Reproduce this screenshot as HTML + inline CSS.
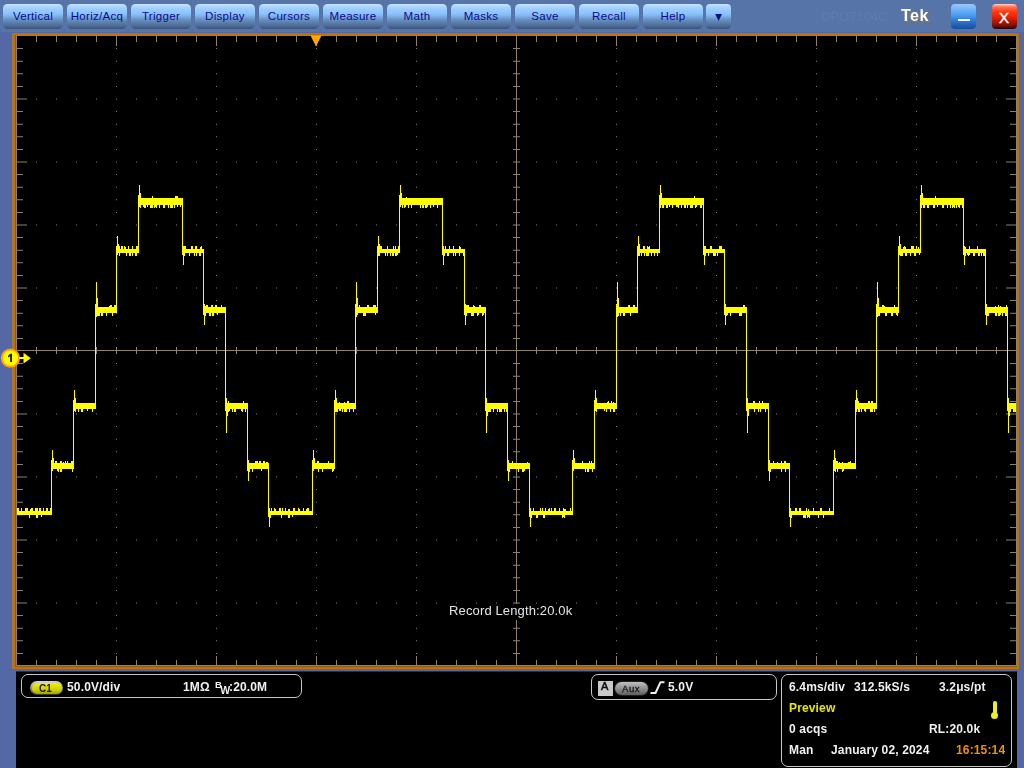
<!DOCTYPE html>
<html><head><meta charset="utf-8"><style>
html,body{margin:0;padding:0}
body{width:1024px;height:768px;position:relative;overflow:hidden;background:#5468a6;font-family:"Liberation Sans",sans-serif}
#topbar{position:absolute;left:0;top:0;width:1024px;height:32px;background:#5674a8}
.btn{position:absolute;top:4px;height:25px;border-radius:4.5px;box-sizing:border-box;
background:linear-gradient(to bottom,#cce6ff 0px,#b0d8ff 2px,#9ccdff 5px,#8cc4fc 9px,#84bcf4 11px,#78a8dc 13px,#6a98c8 15px,#6088b8 17px,#5a7cac 19px,#52709c 21px,#48628c 23px,#3a5272 25px);
color:#10088e;font-size:11.5px;letter-spacing:0.3px;line-height:25px;text-align:center}
.t{position:absolute;white-space:nowrap;line-height:1;will-change:transform}
.box{position:absolute;border:1.5px solid #c8c8c8;border-radius:7px;box-sizing:border-box}
svg{position:absolute;left:0;top:0}
</style></head><body>
<div id="topbar"></div>
<div class="btn" style="left:3px;width:60px">Vertical</div>
<div class="btn" style="left:67px;width:60px">Horiz/Acq</div>
<div class="btn" style="left:131px;width:60px">Trigger</div>
<div class="btn" style="left:195px;width:60px">Display</div>
<div class="btn" style="left:259px;width:60px">Cursors</div>
<div class="btn" style="left:323px;width:60px">Measure</div>
<div class="btn" style="left:387px;width:60px">Math</div>
<div class="btn" style="left:451px;width:60px">Masks</div>
<div class="btn" style="left:515px;width:60px">Save</div>
<div class="btn" style="left:579px;width:60px">Recall</div>
<div class="btn" style="left:643px;width:60px">Help</div>
<div class="btn" style="left:706px;width:25px;border-radius:4px"></div>
<svg width="1024" height="40" style="position:absolute;left:0;top:0"><path d="M715.2 14H722L718.6 20.8Z" fill="#0c0a84"/></svg>

<div class="t" style="left:821px;top:10px;font-size:13px;color:#5b7cad">DPO7104C</div>
<div class="t" style="left:901px;top:8px;font-size:16px;font-weight:bold;letter-spacing:0.5px;color:#fff;text-shadow:1.5px 1.5px 0.6px rgba(140,118,80,0.75)">Tek</div>
<div style="position:absolute;left:951px;top:4px;width:25px;height:25px;border-radius:4px;background:linear-gradient(to bottom,#9ac8fa 0%,#4a9cf4 45%,#2a74d0 70%,#1a4c98 100%)"></div>
<div style="position:absolute;left:958px;top:19px;width:12px;height:2px;background:#fff"></div>
<div style="position:absolute;left:992px;top:4px;width:25px;height:25px;border-radius:4px;background:linear-gradient(to bottom,#ffd4c4 0px,#ff7050 3px,#ff3810 8px,#f02800 12px,#b01400 18px,#701000 22px,#280000 25px)"></div>
<div style="position:absolute;line-height:1;left:999px;top:10px;font-size:15px;color:#fff;-webkit-text-stroke:0.4px #fff">X</div>
<svg width="1024" height="768" viewBox="0 0 1024 768">
<rect x="11" y="32" width="1009" height="638" fill="#5068ac"/>
<rect x="12" y="33" width="1007" height="636" fill="#c27000"/>
<rect x="12" y="33" width="1" height="636" fill="#a87838"/>
<rect x="15" y="35" width="1" height="632" fill="#8a5a14"/>
<rect x="15" y="666" width="1002" height="1" fill="#8a5c18"/>
<rect x="16" y="35" width="1001" height="631" fill="#8e826a"/>
<rect x="17" y="36" width="999" height="629" fill="#000"/>
<rect x="16" y="671" width="1001" height="1" fill="#283050"/>
<path shape-rendering="crispEdges" fill="#8e826a" d="M36 36h1v6h-1zM36 660h1v5h-1zM56 36h1v6h-1zM56 660h1v5h-1zM76 36h1v6h-1zM76 660h1v5h-1zM96 36h1v6h-1zM96 660h1v5h-1zM116 36h1v10h-1zM116 656h1v9h-1zM136 36h1v6h-1zM136 660h1v5h-1zM156 36h1v6h-1zM156 660h1v5h-1zM176 36h1v6h-1zM176 660h1v5h-1zM196 36h1v6h-1zM196 660h1v5h-1zM216 36h1v10h-1zM216 656h1v9h-1zM236 36h1v6h-1zM236 660h1v5h-1zM256 36h1v6h-1zM256 660h1v5h-1zM276 36h1v6h-1zM276 660h1v5h-1zM296 36h1v6h-1zM296 660h1v5h-1zM316 36h1v10h-1zM316 656h1v9h-1zM336 36h1v6h-1zM336 660h1v5h-1zM356 36h1v6h-1zM356 660h1v5h-1zM376 36h1v6h-1zM376 660h1v5h-1zM396 36h1v6h-1zM396 660h1v5h-1zM416 36h1v10h-1zM416 656h1v9h-1zM436 36h1v6h-1zM436 660h1v5h-1zM456 36h1v6h-1zM456 660h1v5h-1zM476 36h1v6h-1zM476 660h1v5h-1zM496 36h1v6h-1zM496 660h1v5h-1zM536 36h1v6h-1zM536 660h1v5h-1zM556 36h1v6h-1zM556 660h1v5h-1zM576 36h1v6h-1zM576 660h1v5h-1zM596 36h1v6h-1zM596 660h1v5h-1zM616 36h1v10h-1zM616 656h1v9h-1zM636 36h1v6h-1zM636 660h1v5h-1zM656 36h1v6h-1zM656 660h1v5h-1zM676 36h1v6h-1zM676 660h1v5h-1zM696 36h1v6h-1zM696 660h1v5h-1zM716 36h1v10h-1zM716 656h1v9h-1zM736 36h1v6h-1zM736 660h1v5h-1zM756 36h1v6h-1zM756 660h1v5h-1zM776 36h1v6h-1zM776 660h1v5h-1zM796 36h1v6h-1zM796 660h1v5h-1zM816 36h1v10h-1zM816 656h1v9h-1zM836 36h1v6h-1zM836 660h1v5h-1zM856 36h1v6h-1zM856 660h1v5h-1zM876 36h1v6h-1zM876 660h1v5h-1zM896 36h1v6h-1zM896 660h1v5h-1zM916 36h1v10h-1zM916 656h1v9h-1zM936 36h1v6h-1zM936 660h1v5h-1zM956 36h1v6h-1zM956 660h1v5h-1zM976 36h1v6h-1zM976 660h1v5h-1zM996 36h1v6h-1zM996 660h1v5h-1zM17 350h999v1h-999zM516 36h1v629h-1zM36 347h1v7h-1zM56 347h1v7h-1zM76 347h1v7h-1zM96 347h1v7h-1zM116 347h1v7h-1zM136 347h1v7h-1zM156 347h1v7h-1zM176 347h1v7h-1zM196 347h1v7h-1zM216 347h1v7h-1zM236 347h1v7h-1zM256 347h1v7h-1zM276 347h1v7h-1zM296 347h1v7h-1zM316 347h1v7h-1zM336 347h1v7h-1zM356 347h1v7h-1zM376 347h1v7h-1zM396 347h1v7h-1zM416 347h1v7h-1zM436 347h1v7h-1zM456 347h1v7h-1zM476 347h1v7h-1zM496 347h1v7h-1zM536 347h1v7h-1zM556 347h1v7h-1zM576 347h1v7h-1zM596 347h1v7h-1zM616 347h1v7h-1zM636 347h1v7h-1zM656 347h1v7h-1zM676 347h1v7h-1zM696 347h1v7h-1zM716 347h1v7h-1zM736 347h1v7h-1zM756 347h1v7h-1zM776 347h1v7h-1zM796 347h1v7h-1zM816 347h1v7h-1zM836 347h1v7h-1zM856 347h1v7h-1zM876 347h1v7h-1zM896 347h1v7h-1zM916 347h1v7h-1zM936 347h1v7h-1zM956 347h1v7h-1zM976 347h1v7h-1zM996 347h1v7h-1z"/>
<path fill="#8e826a" d="M17 48.10h6v1h-6zM1010 48.10h6v1h-6zM17 60.70h6v1h-6zM1010 60.70h6v1h-6zM17 73.30h6v1h-6zM1010 73.30h6v1h-6zM17 85.90h6v1h-6zM1010 85.90h6v1h-6zM17 98.50h10v1h-10zM1006 98.50h10v1h-10zM17 111.10h6v1h-6zM1010 111.10h6v1h-6zM17 123.70h6v1h-6zM1010 123.70h6v1h-6zM17 136.30h6v1h-6zM1010 136.30h6v1h-6zM17 148.90h6v1h-6zM1010 148.90h6v1h-6zM17 161.50h10v1h-10zM1006 161.50h10v1h-10zM17 174.10h6v1h-6zM1010 174.10h6v1h-6zM17 186.70h6v1h-6zM1010 186.70h6v1h-6zM17 199.30h6v1h-6zM1010 199.30h6v1h-6zM17 211.90h6v1h-6zM1010 211.90h6v1h-6zM17 224.50h10v1h-10zM1006 224.50h10v1h-10zM17 237.10h6v1h-6zM1010 237.10h6v1h-6zM17 249.70h6v1h-6zM1010 249.70h6v1h-6zM17 262.30h6v1h-6zM1010 262.30h6v1h-6zM17 274.90h6v1h-6zM1010 274.90h6v1h-6zM17 287.50h10v1h-10zM1006 287.50h10v1h-10zM17 300.10h6v1h-6zM1010 300.10h6v1h-6zM17 312.70h6v1h-6zM1010 312.70h6v1h-6zM17 325.30h6v1h-6zM1010 325.30h6v1h-6zM17 337.90h6v1h-6zM1010 337.90h6v1h-6zM17 363.10h6v1h-6zM1010 363.10h6v1h-6zM17 375.70h6v1h-6zM1010 375.70h6v1h-6zM17 388.30h6v1h-6zM1010 388.30h6v1h-6zM17 400.90h6v1h-6zM1010 400.90h6v1h-6zM17 413.50h10v1h-10zM1006 413.50h10v1h-10zM17 426.10h6v1h-6zM1010 426.10h6v1h-6zM17 438.70h6v1h-6zM1010 438.70h6v1h-6zM17 451.30h6v1h-6zM1010 451.30h6v1h-6zM17 463.90h6v1h-6zM1010 463.90h6v1h-6zM17 476.50h10v1h-10zM1006 476.50h10v1h-10zM17 489.10h6v1h-6zM1010 489.10h6v1h-6zM17 501.70h6v1h-6zM1010 501.70h6v1h-6zM17 514.30h6v1h-6zM1010 514.30h6v1h-6zM17 526.90h6v1h-6zM1010 526.90h6v1h-6zM17 539.50h10v1h-10zM1006 539.50h10v1h-10zM17 552.10h6v1h-6zM1010 552.10h6v1h-6zM17 564.70h6v1h-6zM1010 564.70h6v1h-6zM17 577.30h6v1h-6zM1010 577.30h6v1h-6zM17 589.90h6v1h-6zM1010 589.90h6v1h-6zM17 602.50h10v1h-10zM1006 602.50h10v1h-10zM17 615.10h6v1h-6zM1010 615.10h6v1h-6zM17 627.70h6v1h-6zM1010 627.70h6v1h-6zM17 640.30h6v1h-6zM1010 640.30h6v1h-6zM17 652.90h6v1h-6zM1010 652.90h6v1h-6zM513 48.10h7v1h-7zM513 60.70h7v1h-7zM513 73.30h7v1h-7zM513 85.90h7v1h-7zM513 98.50h7v1h-7zM513 111.10h7v1h-7zM513 123.70h7v1h-7zM513 136.30h7v1h-7zM513 148.90h7v1h-7zM513 161.50h7v1h-7zM513 174.10h7v1h-7zM513 186.70h7v1h-7zM513 199.30h7v1h-7zM513 211.90h7v1h-7zM513 224.50h7v1h-7zM513 237.10h7v1h-7zM513 249.70h7v1h-7zM513 262.30h7v1h-7zM513 274.90h7v1h-7zM513 287.50h7v1h-7zM513 300.10h7v1h-7zM513 312.70h7v1h-7zM513 325.30h7v1h-7zM513 337.90h7v1h-7zM513 363.10h7v1h-7zM513 375.70h7v1h-7zM513 388.30h7v1h-7zM513 400.90h7v1h-7zM513 413.50h7v1h-7zM513 426.10h7v1h-7zM513 438.70h7v1h-7zM513 451.30h7v1h-7zM513 463.90h7v1h-7zM513 476.50h7v1h-7zM513 489.10h7v1h-7zM513 501.70h7v1h-7zM513 514.30h7v1h-7zM513 526.90h7v1h-7zM513 539.50h7v1h-7zM513 552.10h7v1h-7zM513 564.70h7v1h-7zM513 577.30h7v1h-7zM513 589.90h7v1h-7zM513 602.50h7v1h-7zM513 615.10h7v1h-7zM513 627.70h7v1h-7zM513 640.30h7v1h-7zM513 652.90h7v1h-7zM116 48.10h1v1h-1zM116 60.70h1v1h-1zM116 73.30h1v1h-1zM116 85.90h1v1h-1zM116 111.10h1v1h-1zM116 123.70h1v1h-1zM116 136.30h1v1h-1zM116 148.90h1v1h-1zM116 174.10h1v1h-1zM116 186.70h1v1h-1zM116 199.30h1v1h-1zM116 211.90h1v1h-1zM116 237.10h1v1h-1zM116 249.70h1v1h-1zM116 262.30h1v1h-1zM116 274.90h1v1h-1zM116 300.10h1v1h-1zM116 312.70h1v1h-1zM116 325.30h1v1h-1zM116 337.90h1v1h-1zM116 363.10h1v1h-1zM116 375.70h1v1h-1zM116 388.30h1v1h-1zM116 400.90h1v1h-1zM116 426.10h1v1h-1zM116 438.70h1v1h-1zM116 451.30h1v1h-1zM116 463.90h1v1h-1zM116 489.10h1v1h-1zM116 501.70h1v1h-1zM116 514.30h1v1h-1zM116 526.90h1v1h-1zM116 552.10h1v1h-1zM116 564.70h1v1h-1zM116 577.30h1v1h-1zM116 589.90h1v1h-1zM116 615.10h1v1h-1zM116 627.70h1v1h-1zM116 640.30h1v1h-1zM116 652.90h1v1h-1zM36 98.50h1v1h-1zM56 98.50h1v1h-1zM76 98.50h1v1h-1zM96 98.50h1v1h-1zM116 98.50h1v1h-1zM136 98.50h1v1h-1zM156 98.50h1v1h-1zM176 98.50h1v1h-1zM196 98.50h1v1h-1zM216 98.50h1v1h-1zM236 98.50h1v1h-1zM256 98.50h1v1h-1zM276 98.50h1v1h-1zM296 98.50h1v1h-1zM316 98.50h1v1h-1zM336 98.50h1v1h-1zM356 98.50h1v1h-1zM376 98.50h1v1h-1zM396 98.50h1v1h-1zM416 98.50h1v1h-1zM436 98.50h1v1h-1zM456 98.50h1v1h-1zM476 98.50h1v1h-1zM496 98.50h1v1h-1zM516 98.50h1v1h-1zM536 98.50h1v1h-1zM556 98.50h1v1h-1zM576 98.50h1v1h-1zM596 98.50h1v1h-1zM616 98.50h1v1h-1zM636 98.50h1v1h-1zM656 98.50h1v1h-1zM676 98.50h1v1h-1zM696 98.50h1v1h-1zM716 98.50h1v1h-1zM736 98.50h1v1h-1zM756 98.50h1v1h-1zM776 98.50h1v1h-1zM796 98.50h1v1h-1zM816 98.50h1v1h-1zM836 98.50h1v1h-1zM856 98.50h1v1h-1zM876 98.50h1v1h-1zM896 98.50h1v1h-1zM916 98.50h1v1h-1zM936 98.50h1v1h-1zM956 98.50h1v1h-1zM976 98.50h1v1h-1zM996 98.50h1v1h-1zM216 48.10h1v1h-1zM216 60.70h1v1h-1zM216 73.30h1v1h-1zM216 85.90h1v1h-1zM216 111.10h1v1h-1zM216 123.70h1v1h-1zM216 136.30h1v1h-1zM216 148.90h1v1h-1zM216 174.10h1v1h-1zM216 186.70h1v1h-1zM216 199.30h1v1h-1zM216 211.90h1v1h-1zM216 237.10h1v1h-1zM216 249.70h1v1h-1zM216 262.30h1v1h-1zM216 274.90h1v1h-1zM216 300.10h1v1h-1zM216 312.70h1v1h-1zM216 325.30h1v1h-1zM216 337.90h1v1h-1zM216 363.10h1v1h-1zM216 375.70h1v1h-1zM216 388.30h1v1h-1zM216 400.90h1v1h-1zM216 426.10h1v1h-1zM216 438.70h1v1h-1zM216 451.30h1v1h-1zM216 463.90h1v1h-1zM216 489.10h1v1h-1zM216 501.70h1v1h-1zM216 514.30h1v1h-1zM216 526.90h1v1h-1zM216 552.10h1v1h-1zM216 564.70h1v1h-1zM216 577.30h1v1h-1zM216 589.90h1v1h-1zM216 615.10h1v1h-1zM216 627.70h1v1h-1zM216 640.30h1v1h-1zM216 652.90h1v1h-1zM36 161.50h1v1h-1zM56 161.50h1v1h-1zM76 161.50h1v1h-1zM96 161.50h1v1h-1zM116 161.50h1v1h-1zM136 161.50h1v1h-1zM156 161.50h1v1h-1zM176 161.50h1v1h-1zM196 161.50h1v1h-1zM216 161.50h1v1h-1zM236 161.50h1v1h-1zM256 161.50h1v1h-1zM276 161.50h1v1h-1zM296 161.50h1v1h-1zM316 161.50h1v1h-1zM336 161.50h1v1h-1zM356 161.50h1v1h-1zM376 161.50h1v1h-1zM396 161.50h1v1h-1zM416 161.50h1v1h-1zM436 161.50h1v1h-1zM456 161.50h1v1h-1zM476 161.50h1v1h-1zM496 161.50h1v1h-1zM516 161.50h1v1h-1zM536 161.50h1v1h-1zM556 161.50h1v1h-1zM576 161.50h1v1h-1zM596 161.50h1v1h-1zM616 161.50h1v1h-1zM636 161.50h1v1h-1zM656 161.50h1v1h-1zM676 161.50h1v1h-1zM696 161.50h1v1h-1zM716 161.50h1v1h-1zM736 161.50h1v1h-1zM756 161.50h1v1h-1zM776 161.50h1v1h-1zM796 161.50h1v1h-1zM816 161.50h1v1h-1zM836 161.50h1v1h-1zM856 161.50h1v1h-1zM876 161.50h1v1h-1zM896 161.50h1v1h-1zM916 161.50h1v1h-1zM936 161.50h1v1h-1zM956 161.50h1v1h-1zM976 161.50h1v1h-1zM996 161.50h1v1h-1zM316 48.10h1v1h-1zM316 60.70h1v1h-1zM316 73.30h1v1h-1zM316 85.90h1v1h-1zM316 111.10h1v1h-1zM316 123.70h1v1h-1zM316 136.30h1v1h-1zM316 148.90h1v1h-1zM316 174.10h1v1h-1zM316 186.70h1v1h-1zM316 199.30h1v1h-1zM316 211.90h1v1h-1zM316 237.10h1v1h-1zM316 249.70h1v1h-1zM316 262.30h1v1h-1zM316 274.90h1v1h-1zM316 300.10h1v1h-1zM316 312.70h1v1h-1zM316 325.30h1v1h-1zM316 337.90h1v1h-1zM316 363.10h1v1h-1zM316 375.70h1v1h-1zM316 388.30h1v1h-1zM316 400.90h1v1h-1zM316 426.10h1v1h-1zM316 438.70h1v1h-1zM316 451.30h1v1h-1zM316 463.90h1v1h-1zM316 489.10h1v1h-1zM316 501.70h1v1h-1zM316 514.30h1v1h-1zM316 526.90h1v1h-1zM316 552.10h1v1h-1zM316 564.70h1v1h-1zM316 577.30h1v1h-1zM316 589.90h1v1h-1zM316 615.10h1v1h-1zM316 627.70h1v1h-1zM316 640.30h1v1h-1zM316 652.90h1v1h-1zM36 224.50h1v1h-1zM56 224.50h1v1h-1zM76 224.50h1v1h-1zM96 224.50h1v1h-1zM116 224.50h1v1h-1zM136 224.50h1v1h-1zM156 224.50h1v1h-1zM176 224.50h1v1h-1zM196 224.50h1v1h-1zM216 224.50h1v1h-1zM236 224.50h1v1h-1zM256 224.50h1v1h-1zM276 224.50h1v1h-1zM296 224.50h1v1h-1zM316 224.50h1v1h-1zM336 224.50h1v1h-1zM356 224.50h1v1h-1zM376 224.50h1v1h-1zM396 224.50h1v1h-1zM416 224.50h1v1h-1zM436 224.50h1v1h-1zM456 224.50h1v1h-1zM476 224.50h1v1h-1zM496 224.50h1v1h-1zM516 224.50h1v1h-1zM536 224.50h1v1h-1zM556 224.50h1v1h-1zM576 224.50h1v1h-1zM596 224.50h1v1h-1zM616 224.50h1v1h-1zM636 224.50h1v1h-1zM656 224.50h1v1h-1zM676 224.50h1v1h-1zM696 224.50h1v1h-1zM716 224.50h1v1h-1zM736 224.50h1v1h-1zM756 224.50h1v1h-1zM776 224.50h1v1h-1zM796 224.50h1v1h-1zM816 224.50h1v1h-1zM836 224.50h1v1h-1zM856 224.50h1v1h-1zM876 224.50h1v1h-1zM896 224.50h1v1h-1zM916 224.50h1v1h-1zM936 224.50h1v1h-1zM956 224.50h1v1h-1zM976 224.50h1v1h-1zM996 224.50h1v1h-1zM416 48.10h1v1h-1zM416 60.70h1v1h-1zM416 73.30h1v1h-1zM416 85.90h1v1h-1zM416 111.10h1v1h-1zM416 123.70h1v1h-1zM416 136.30h1v1h-1zM416 148.90h1v1h-1zM416 174.10h1v1h-1zM416 186.70h1v1h-1zM416 199.30h1v1h-1zM416 211.90h1v1h-1zM416 237.10h1v1h-1zM416 249.70h1v1h-1zM416 262.30h1v1h-1zM416 274.90h1v1h-1zM416 300.10h1v1h-1zM416 312.70h1v1h-1zM416 325.30h1v1h-1zM416 337.90h1v1h-1zM416 363.10h1v1h-1zM416 375.70h1v1h-1zM416 388.30h1v1h-1zM416 400.90h1v1h-1zM416 426.10h1v1h-1zM416 438.70h1v1h-1zM416 451.30h1v1h-1zM416 463.90h1v1h-1zM416 489.10h1v1h-1zM416 501.70h1v1h-1zM416 514.30h1v1h-1zM416 526.90h1v1h-1zM416 552.10h1v1h-1zM416 564.70h1v1h-1zM416 577.30h1v1h-1zM416 589.90h1v1h-1zM416 615.10h1v1h-1zM416 627.70h1v1h-1zM416 640.30h1v1h-1zM416 652.90h1v1h-1zM36 287.50h1v1h-1zM56 287.50h1v1h-1zM76 287.50h1v1h-1zM96 287.50h1v1h-1zM116 287.50h1v1h-1zM136 287.50h1v1h-1zM156 287.50h1v1h-1zM176 287.50h1v1h-1zM196 287.50h1v1h-1zM216 287.50h1v1h-1zM236 287.50h1v1h-1zM256 287.50h1v1h-1zM276 287.50h1v1h-1zM296 287.50h1v1h-1zM316 287.50h1v1h-1zM336 287.50h1v1h-1zM356 287.50h1v1h-1zM376 287.50h1v1h-1zM396 287.50h1v1h-1zM416 287.50h1v1h-1zM436 287.50h1v1h-1zM456 287.50h1v1h-1zM476 287.50h1v1h-1zM496 287.50h1v1h-1zM516 287.50h1v1h-1zM536 287.50h1v1h-1zM556 287.50h1v1h-1zM576 287.50h1v1h-1zM596 287.50h1v1h-1zM616 287.50h1v1h-1zM636 287.50h1v1h-1zM656 287.50h1v1h-1zM676 287.50h1v1h-1zM696 287.50h1v1h-1zM716 287.50h1v1h-1zM736 287.50h1v1h-1zM756 287.50h1v1h-1zM776 287.50h1v1h-1zM796 287.50h1v1h-1zM816 287.50h1v1h-1zM836 287.50h1v1h-1zM856 287.50h1v1h-1zM876 287.50h1v1h-1zM896 287.50h1v1h-1zM916 287.50h1v1h-1zM936 287.50h1v1h-1zM956 287.50h1v1h-1zM976 287.50h1v1h-1zM996 287.50h1v1h-1zM616 48.10h1v1h-1zM616 60.70h1v1h-1zM616 73.30h1v1h-1zM616 85.90h1v1h-1zM616 111.10h1v1h-1zM616 123.70h1v1h-1zM616 136.30h1v1h-1zM616 148.90h1v1h-1zM616 174.10h1v1h-1zM616 186.70h1v1h-1zM616 199.30h1v1h-1zM616 211.90h1v1h-1zM616 237.10h1v1h-1zM616 249.70h1v1h-1zM616 262.30h1v1h-1zM616 274.90h1v1h-1zM616 300.10h1v1h-1zM616 312.70h1v1h-1zM616 325.30h1v1h-1zM616 337.90h1v1h-1zM616 363.10h1v1h-1zM616 375.70h1v1h-1zM616 388.30h1v1h-1zM616 400.90h1v1h-1zM616 426.10h1v1h-1zM616 438.70h1v1h-1zM616 451.30h1v1h-1zM616 463.90h1v1h-1zM616 489.10h1v1h-1zM616 501.70h1v1h-1zM616 514.30h1v1h-1zM616 526.90h1v1h-1zM616 552.10h1v1h-1zM616 564.70h1v1h-1zM616 577.30h1v1h-1zM616 589.90h1v1h-1zM616 615.10h1v1h-1zM616 627.70h1v1h-1zM616 640.30h1v1h-1zM616 652.90h1v1h-1zM36 413.50h1v1h-1zM56 413.50h1v1h-1zM76 413.50h1v1h-1zM96 413.50h1v1h-1zM116 413.50h1v1h-1zM136 413.50h1v1h-1zM156 413.50h1v1h-1zM176 413.50h1v1h-1zM196 413.50h1v1h-1zM216 413.50h1v1h-1zM236 413.50h1v1h-1zM256 413.50h1v1h-1zM276 413.50h1v1h-1zM296 413.50h1v1h-1zM316 413.50h1v1h-1zM336 413.50h1v1h-1zM356 413.50h1v1h-1zM376 413.50h1v1h-1zM396 413.50h1v1h-1zM416 413.50h1v1h-1zM436 413.50h1v1h-1zM456 413.50h1v1h-1zM476 413.50h1v1h-1zM496 413.50h1v1h-1zM516 413.50h1v1h-1zM536 413.50h1v1h-1zM556 413.50h1v1h-1zM576 413.50h1v1h-1zM596 413.50h1v1h-1zM616 413.50h1v1h-1zM636 413.50h1v1h-1zM656 413.50h1v1h-1zM676 413.50h1v1h-1zM696 413.50h1v1h-1zM716 413.50h1v1h-1zM736 413.50h1v1h-1zM756 413.50h1v1h-1zM776 413.50h1v1h-1zM796 413.50h1v1h-1zM816 413.50h1v1h-1zM836 413.50h1v1h-1zM856 413.50h1v1h-1zM876 413.50h1v1h-1zM896 413.50h1v1h-1zM916 413.50h1v1h-1zM936 413.50h1v1h-1zM956 413.50h1v1h-1zM976 413.50h1v1h-1zM996 413.50h1v1h-1zM716 48.10h1v1h-1zM716 60.70h1v1h-1zM716 73.30h1v1h-1zM716 85.90h1v1h-1zM716 111.10h1v1h-1zM716 123.70h1v1h-1zM716 136.30h1v1h-1zM716 148.90h1v1h-1zM716 174.10h1v1h-1zM716 186.70h1v1h-1zM716 199.30h1v1h-1zM716 211.90h1v1h-1zM716 237.10h1v1h-1zM716 249.70h1v1h-1zM716 262.30h1v1h-1zM716 274.90h1v1h-1zM716 300.10h1v1h-1zM716 312.70h1v1h-1zM716 325.30h1v1h-1zM716 337.90h1v1h-1zM716 363.10h1v1h-1zM716 375.70h1v1h-1zM716 388.30h1v1h-1zM716 400.90h1v1h-1zM716 426.10h1v1h-1zM716 438.70h1v1h-1zM716 451.30h1v1h-1zM716 463.90h1v1h-1zM716 489.10h1v1h-1zM716 501.70h1v1h-1zM716 514.30h1v1h-1zM716 526.90h1v1h-1zM716 552.10h1v1h-1zM716 564.70h1v1h-1zM716 577.30h1v1h-1zM716 589.90h1v1h-1zM716 615.10h1v1h-1zM716 627.70h1v1h-1zM716 640.30h1v1h-1zM716 652.90h1v1h-1zM36 476.50h1v1h-1zM56 476.50h1v1h-1zM76 476.50h1v1h-1zM96 476.50h1v1h-1zM116 476.50h1v1h-1zM136 476.50h1v1h-1zM156 476.50h1v1h-1zM176 476.50h1v1h-1zM196 476.50h1v1h-1zM216 476.50h1v1h-1zM236 476.50h1v1h-1zM256 476.50h1v1h-1zM276 476.50h1v1h-1zM296 476.50h1v1h-1zM316 476.50h1v1h-1zM336 476.50h1v1h-1zM356 476.50h1v1h-1zM376 476.50h1v1h-1zM396 476.50h1v1h-1zM416 476.50h1v1h-1zM436 476.50h1v1h-1zM456 476.50h1v1h-1zM476 476.50h1v1h-1zM496 476.50h1v1h-1zM516 476.50h1v1h-1zM536 476.50h1v1h-1zM556 476.50h1v1h-1zM576 476.50h1v1h-1zM596 476.50h1v1h-1zM616 476.50h1v1h-1zM636 476.50h1v1h-1zM656 476.50h1v1h-1zM676 476.50h1v1h-1zM696 476.50h1v1h-1zM716 476.50h1v1h-1zM736 476.50h1v1h-1zM756 476.50h1v1h-1zM776 476.50h1v1h-1zM796 476.50h1v1h-1zM816 476.50h1v1h-1zM836 476.50h1v1h-1zM856 476.50h1v1h-1zM876 476.50h1v1h-1zM896 476.50h1v1h-1zM916 476.50h1v1h-1zM936 476.50h1v1h-1zM956 476.50h1v1h-1zM976 476.50h1v1h-1zM996 476.50h1v1h-1zM816 48.10h1v1h-1zM816 60.70h1v1h-1zM816 73.30h1v1h-1zM816 85.90h1v1h-1zM816 111.10h1v1h-1zM816 123.70h1v1h-1zM816 136.30h1v1h-1zM816 148.90h1v1h-1zM816 174.10h1v1h-1zM816 186.70h1v1h-1zM816 199.30h1v1h-1zM816 211.90h1v1h-1zM816 237.10h1v1h-1zM816 249.70h1v1h-1zM816 262.30h1v1h-1zM816 274.90h1v1h-1zM816 300.10h1v1h-1zM816 312.70h1v1h-1zM816 325.30h1v1h-1zM816 337.90h1v1h-1zM816 363.10h1v1h-1zM816 375.70h1v1h-1zM816 388.30h1v1h-1zM816 400.90h1v1h-1zM816 426.10h1v1h-1zM816 438.70h1v1h-1zM816 451.30h1v1h-1zM816 463.90h1v1h-1zM816 489.10h1v1h-1zM816 501.70h1v1h-1zM816 514.30h1v1h-1zM816 526.90h1v1h-1zM816 552.10h1v1h-1zM816 564.70h1v1h-1zM816 577.30h1v1h-1zM816 589.90h1v1h-1zM816 615.10h1v1h-1zM816 627.70h1v1h-1zM816 640.30h1v1h-1zM816 652.90h1v1h-1zM36 539.50h1v1h-1zM56 539.50h1v1h-1zM76 539.50h1v1h-1zM96 539.50h1v1h-1zM116 539.50h1v1h-1zM136 539.50h1v1h-1zM156 539.50h1v1h-1zM176 539.50h1v1h-1zM196 539.50h1v1h-1zM216 539.50h1v1h-1zM236 539.50h1v1h-1zM256 539.50h1v1h-1zM276 539.50h1v1h-1zM296 539.50h1v1h-1zM316 539.50h1v1h-1zM336 539.50h1v1h-1zM356 539.50h1v1h-1zM376 539.50h1v1h-1zM396 539.50h1v1h-1zM416 539.50h1v1h-1zM436 539.50h1v1h-1zM456 539.50h1v1h-1zM476 539.50h1v1h-1zM496 539.50h1v1h-1zM516 539.50h1v1h-1zM536 539.50h1v1h-1zM556 539.50h1v1h-1zM576 539.50h1v1h-1zM596 539.50h1v1h-1zM616 539.50h1v1h-1zM636 539.50h1v1h-1zM656 539.50h1v1h-1zM676 539.50h1v1h-1zM696 539.50h1v1h-1zM716 539.50h1v1h-1zM736 539.50h1v1h-1zM756 539.50h1v1h-1zM776 539.50h1v1h-1zM796 539.50h1v1h-1zM816 539.50h1v1h-1zM836 539.50h1v1h-1zM856 539.50h1v1h-1zM876 539.50h1v1h-1zM896 539.50h1v1h-1zM916 539.50h1v1h-1zM936 539.50h1v1h-1zM956 539.50h1v1h-1zM976 539.50h1v1h-1zM996 539.50h1v1h-1zM916 48.10h1v1h-1zM916 60.70h1v1h-1zM916 73.30h1v1h-1zM916 85.90h1v1h-1zM916 111.10h1v1h-1zM916 123.70h1v1h-1zM916 136.30h1v1h-1zM916 148.90h1v1h-1zM916 174.10h1v1h-1zM916 186.70h1v1h-1zM916 199.30h1v1h-1zM916 211.90h1v1h-1zM916 237.10h1v1h-1zM916 249.70h1v1h-1zM916 262.30h1v1h-1zM916 274.90h1v1h-1zM916 300.10h1v1h-1zM916 312.70h1v1h-1zM916 325.30h1v1h-1zM916 337.90h1v1h-1zM916 363.10h1v1h-1zM916 375.70h1v1h-1zM916 388.30h1v1h-1zM916 400.90h1v1h-1zM916 426.10h1v1h-1zM916 438.70h1v1h-1zM916 451.30h1v1h-1zM916 463.90h1v1h-1zM916 489.10h1v1h-1zM916 501.70h1v1h-1zM916 514.30h1v1h-1zM916 526.90h1v1h-1zM916 552.10h1v1h-1zM916 564.70h1v1h-1zM916 577.30h1v1h-1zM916 589.90h1v1h-1zM916 615.10h1v1h-1zM916 627.70h1v1h-1zM916 640.30h1v1h-1zM916 652.90h1v1h-1zM36 602.50h1v1h-1zM56 602.50h1v1h-1zM76 602.50h1v1h-1zM96 602.50h1v1h-1zM116 602.50h1v1h-1zM136 602.50h1v1h-1zM156 602.50h1v1h-1zM176 602.50h1v1h-1zM196 602.50h1v1h-1zM216 602.50h1v1h-1zM236 602.50h1v1h-1zM256 602.50h1v1h-1zM276 602.50h1v1h-1zM296 602.50h1v1h-1zM316 602.50h1v1h-1zM336 602.50h1v1h-1zM356 602.50h1v1h-1zM376 602.50h1v1h-1zM396 602.50h1v1h-1zM416 602.50h1v1h-1zM436 602.50h1v1h-1zM456 602.50h1v1h-1zM476 602.50h1v1h-1zM496 602.50h1v1h-1zM516 602.50h1v1h-1zM536 602.50h1v1h-1zM556 602.50h1v1h-1zM576 602.50h1v1h-1zM596 602.50h1v1h-1zM616 602.50h1v1h-1zM636 602.50h1v1h-1zM656 602.50h1v1h-1zM676 602.50h1v1h-1zM696 602.50h1v1h-1zM716 602.50h1v1h-1zM736 602.50h1v1h-1zM756 602.50h1v1h-1zM776 602.50h1v1h-1zM796 602.50h1v1h-1zM816 602.50h1v1h-1zM836 602.50h1v1h-1zM856 602.50h1v1h-1zM876 602.50h1v1h-1zM896 602.50h1v1h-1zM916 602.50h1v1h-1zM936 602.50h1v1h-1zM956 602.50h1v1h-1zM976 602.50h1v1h-1zM996 602.50h1v1h-1z"/>
<path shape-rendering="crispEdges" fill="#ffff00" d="M17 508h1v7h-1zM18 508h1v7h-1zM19 511h1v4h-1zM20 511h1v4h-1zM21 508h1v7h-1zM22 511h1v4h-1zM23 511h1v4h-1zM24 511h1v4h-1zM25 508h1v7h-1zM26 508h1v7h-1zM27 508h1v7h-1zM28 511h1v4h-1zM29 511h1v7h-1zM30 509h1v6h-1zM31 508h1v7h-1zM32 508h1v7h-1zM33 511h1v4h-1zM34 511h1v4h-1zM35 508h1v7h-1zM36 508h1v10h-1zM37 508h1v10h-1zM38 511h1v4h-1zM39 508h1v7h-1zM40 508h1v7h-1zM41 511h1v6h-1zM42 511h1v4h-1zM43 508h1v7h-1zM44 511h1v4h-1zM45 511h1v4h-1zM46 508h1v7h-1zM47 508h1v7h-1zM48 511h1v4h-1zM49 511h1v4h-1zM50 508h1v7h-1zM52 463h1v6h-1zM53 461h1v8h-1zM54 463h1v6h-1zM55 461h1v8h-1zM56 461h1v8h-1zM57 463h1v8h-1zM58 463h1v9h-1zM59 463h1v6h-1zM60 461h1v11h-1zM61 461h1v11h-1zM62 463h1v6h-1zM63 462h1v7h-1zM64 463h1v6h-1zM65 461h1v8h-1zM66 463h1v6h-1zM67 461h1v8h-1zM68 463h1v6h-1zM69 463h1v6h-1zM70 463h1v6h-1zM71 461h1v8h-1zM72 461h1v11h-1zM74 403h1v6h-1zM75 403h1v9h-1zM76 403h1v6h-1zM77 403h1v6h-1zM78 403h1v9h-1zM79 403h1v6h-1zM80 403h1v6h-1zM81 403h1v9h-1zM82 403h1v9h-1zM83 403h1v6h-1zM84 403h1v6h-1zM85 403h1v6h-1zM86 403h1v6h-1zM87 403h1v8h-1zM88 403h1v6h-1zM89 403h1v6h-1zM90 403h1v6h-1zM91 403h1v6h-1zM92 403h1v9h-1zM93 403h1v6h-1zM94 403h1v6h-1zM96 307h1v6h-1zM97 307h1v9h-1zM98 307h1v9h-1zM99 307h1v9h-1zM100 307h1v6h-1zM101 307h1v9h-1zM102 307h1v9h-1zM103 307h1v6h-1zM104 307h1v6h-1zM105 307h1v6h-1zM106 307h1v9h-1zM107 307h1v6h-1zM108 307h1v6h-1zM109 306h1v7h-1zM110 305h1v8h-1zM111 305h1v8h-1zM112 307h1v9h-1zM113 307h1v6h-1zM114 305h1v8h-1zM115 305h1v8h-1zM117 249h1v4h-1zM118 246h1v7h-1zM119 246h1v10h-1zM120 249h1v4h-1zM121 246h1v7h-1zM122 246h1v7h-1zM123 249h1v4h-1zM124 246h1v7h-1zM125 247h1v6h-1zM126 249h1v7h-1zM127 249h1v4h-1zM128 246h1v7h-1zM129 249h1v7h-1zM130 249h1v7h-1zM131 249h1v4h-1zM132 246h1v10h-1zM133 249h1v4h-1zM134 249h1v4h-1zM135 249h1v7h-1zM136 246h1v10h-1zM137 246h1v7h-1zM139 198h1v7h-1zM140 198h1v10h-1zM141 198h1v7h-1zM142 198h1v7h-1zM143 198h1v9h-1zM144 198h1v10h-1zM145 198h1v10h-1zM146 198h1v7h-1zM147 198h1v9h-1zM148 198h1v7h-1zM149 198h1v7h-1zM150 198h1v10h-1zM151 198h1v10h-1zM152 196h1v12h-1zM153 198h1v7h-1zM154 198h1v10h-1zM155 198h1v9h-1zM156 198h1v10h-1zM157 198h1v7h-1zM158 198h1v7h-1zM159 198h1v10h-1zM160 198h1v7h-1zM161 198h1v7h-1zM162 198h1v7h-1zM163 198h1v10h-1zM164 198h1v10h-1zM165 198h1v7h-1zM166 198h1v7h-1zM167 198h1v7h-1zM168 198h1v10h-1zM169 198h1v7h-1zM170 198h1v10h-1zM171 198h1v10h-1zM172 198h1v10h-1zM173 198h1v7h-1zM174 198h1v10h-1zM175 196h1v9h-1zM176 196h1v9h-1zM177 196h1v11h-1zM178 198h1v7h-1zM179 198h1v7h-1zM180 198h1v9h-1zM181 198h1v7h-1zM183 249h1v4h-1zM184 246h1v7h-1zM185 246h1v7h-1zM186 249h1v4h-1zM187 249h1v4h-1zM188 249h1v4h-1zM189 249h1v7h-1zM190 249h1v4h-1zM191 246h1v7h-1zM192 246h1v7h-1zM193 249h1v4h-1zM194 249h1v7h-1zM195 246h1v7h-1zM196 246h1v10h-1zM197 249h1v4h-1zM198 249h1v4h-1zM199 249h1v7h-1zM200 247h1v9h-1zM201 246h1v7h-1zM202 249h1v4h-1zM204 307h1v8h-1zM205 306h1v10h-1zM206 305h1v8h-1zM207 305h1v8h-1zM208 307h1v6h-1zM209 307h1v9h-1zM210 307h1v9h-1zM211 305h1v8h-1zM212 305h1v11h-1zM213 307h1v9h-1zM214 307h1v6h-1zM215 305h1v8h-1zM216 305h1v8h-1zM217 307h1v8h-1zM218 307h1v6h-1zM219 307h1v6h-1zM220 307h1v6h-1zM221 305h1v8h-1zM222 307h1v6h-1zM223 307h1v6h-1zM224 307h1v6h-1zM226 403h1v6h-1zM227 403h1v6h-1zM228 401h1v11h-1zM229 403h1v8h-1zM230 403h1v6h-1zM231 403h1v6h-1zM232 403h1v9h-1zM233 403h1v6h-1zM234 403h1v9h-1zM235 403h1v9h-1zM236 403h1v6h-1zM237 403h1v6h-1zM238 403h1v6h-1zM239 403h1v6h-1zM240 403h1v6h-1zM241 403h1v8h-1zM242 403h1v9h-1zM243 401h1v8h-1zM244 403h1v6h-1zM245 403h1v9h-1zM246 403h1v6h-1zM248 461h1v8h-1zM249 463h1v6h-1zM250 463h1v6h-1zM251 463h1v6h-1zM252 463h1v9h-1zM253 463h1v6h-1zM254 463h1v6h-1zM255 461h1v8h-1zM256 461h1v8h-1zM257 461h1v8h-1zM258 463h1v6h-1zM259 461h1v8h-1zM260 461h1v8h-1zM261 463h1v8h-1zM262 463h1v6h-1zM263 461h1v8h-1zM264 461h1v8h-1zM265 463h1v6h-1zM266 462h1v7h-1zM267 462h1v7h-1zM269 511h1v4h-1zM270 511h1v4h-1zM271 508h1v7h-1zM272 511h1v4h-1zM273 511h1v4h-1zM274 508h1v7h-1zM275 509h1v6h-1zM276 511h1v4h-1zM277 511h1v4h-1zM278 511h1v4h-1zM279 508h1v7h-1zM280 508h1v7h-1zM281 511h1v7h-1zM282 508h1v7h-1zM283 511h1v4h-1zM284 511h1v4h-1zM285 508h1v7h-1zM286 511h1v4h-1zM287 511h1v4h-1zM288 509h1v9h-1zM289 509h1v9h-1zM290 511h1v4h-1zM291 511h1v4h-1zM292 511h1v6h-1zM293 508h1v7h-1zM294 508h1v7h-1zM295 511h1v4h-1zM296 511h1v4h-1zM297 511h1v4h-1zM298 508h1v7h-1zM299 509h1v6h-1zM300 511h1v4h-1zM301 511h1v4h-1zM302 511h1v4h-1zM303 508h1v7h-1zM304 511h1v4h-1zM305 511h1v4h-1zM306 509h1v6h-1zM307 508h1v7h-1zM308 508h1v7h-1zM309 511h1v4h-1zM310 511h1v4h-1zM311 511h1v4h-1zM313 463h1v6h-1zM314 463h1v6h-1zM315 463h1v6h-1zM316 463h1v6h-1zM317 461h1v8h-1zM318 461h1v11h-1zM319 463h1v6h-1zM320 463h1v6h-1zM321 463h1v6h-1zM322 463h1v9h-1zM323 463h1v6h-1zM324 463h1v6h-1zM325 463h1v6h-1zM326 463h1v6h-1zM327 463h1v6h-1zM328 461h1v8h-1zM329 463h1v6h-1zM330 463h1v6h-1zM331 463h1v6h-1zM332 463h1v9h-1zM333 463h1v8h-1zM335 401h1v11h-1zM336 403h1v9h-1zM337 403h1v9h-1zM338 403h1v6h-1zM339 402h1v9h-1zM340 403h1v8h-1zM341 403h1v6h-1zM342 403h1v9h-1zM343 403h1v6h-1zM344 402h1v10h-1zM345 403h1v9h-1zM346 403h1v9h-1zM347 401h1v8h-1zM348 401h1v8h-1zM349 403h1v9h-1zM350 403h1v6h-1zM351 403h1v6h-1zM352 403h1v6h-1zM353 403h1v9h-1zM354 403h1v6h-1zM356 307h1v9h-1zM357 307h1v8h-1zM358 307h1v6h-1zM359 305h1v8h-1zM360 307h1v6h-1zM361 307h1v6h-1zM362 307h1v6h-1zM363 307h1v9h-1zM364 307h1v9h-1zM365 307h1v9h-1zM366 307h1v6h-1zM367 305h1v8h-1zM368 305h1v8h-1zM369 307h1v6h-1zM370 307h1v6h-1zM371 307h1v6h-1zM372 307h1v6h-1zM373 305h1v8h-1zM374 305h1v8h-1zM375 305h1v10h-1zM376 307h1v6h-1zM378 249h1v7h-1zM379 246h1v10h-1zM380 246h1v7h-1zM381 246h1v7h-1zM382 249h1v4h-1zM383 249h1v4h-1zM384 249h1v4h-1zM385 249h1v7h-1zM386 249h1v4h-1zM387 246h1v10h-1zM388 249h1v4h-1zM389 249h1v4h-1zM390 249h1v7h-1zM391 249h1v4h-1zM392 249h1v7h-1zM393 246h1v10h-1zM394 249h1v4h-1zM395 246h1v10h-1zM396 249h1v7h-1zM397 249h1v6h-1zM398 246h1v7h-1zM400 198h1v7h-1zM401 198h1v7h-1zM402 198h1v10h-1zM403 198h1v7h-1zM404 198h1v10h-1zM405 198h1v9h-1zM406 197h1v8h-1zM407 198h1v7h-1zM408 198h1v10h-1zM409 198h1v7h-1zM410 198h1v7h-1zM411 198h1v10h-1zM412 198h1v7h-1zM413 198h1v7h-1zM414 198h1v7h-1zM415 198h1v7h-1zM416 198h1v7h-1zM417 198h1v7h-1zM418 198h1v7h-1zM419 198h1v7h-1zM420 198h1v10h-1zM421 198h1v7h-1zM422 198h1v10h-1zM423 198h1v10h-1zM424 198h1v7h-1zM425 198h1v10h-1zM426 198h1v10h-1zM427 198h1v9h-1zM428 198h1v7h-1zM429 198h1v7h-1zM430 198h1v10h-1zM431 198h1v7h-1zM432 198h1v7h-1zM433 198h1v9h-1zM434 198h1v7h-1zM435 198h1v7h-1zM436 198h1v7h-1zM437 198h1v10h-1zM438 198h1v7h-1zM439 198h1v7h-1zM440 198h1v7h-1zM441 198h1v7h-1zM443 249h1v7h-1zM444 249h1v7h-1zM445 246h1v7h-1zM446 249h1v4h-1zM447 249h1v7h-1zM448 249h1v7h-1zM449 246h1v7h-1zM450 249h1v4h-1zM451 249h1v4h-1zM452 249h1v4h-1zM453 246h1v10h-1zM454 249h1v4h-1zM455 249h1v7h-1zM456 249h1v4h-1zM457 249h1v4h-1zM458 249h1v4h-1zM459 246h1v10h-1zM460 247h1v6h-1zM461 249h1v4h-1zM462 249h1v4h-1zM463 249h1v7h-1zM465 307h1v6h-1zM466 305h1v8h-1zM467 305h1v8h-1zM468 305h1v8h-1zM469 307h1v6h-1zM470 307h1v6h-1zM471 307h1v9h-1zM472 307h1v9h-1zM473 305h1v11h-1zM474 306h1v7h-1zM475 307h1v6h-1zM476 307h1v6h-1zM477 307h1v9h-1zM478 307h1v8h-1zM479 305h1v8h-1zM480 305h1v8h-1zM481 307h1v6h-1zM482 307h1v9h-1zM483 307h1v8h-1zM484 307h1v6h-1zM486 403h1v6h-1zM487 403h1v6h-1zM488 403h1v9h-1zM489 403h1v9h-1zM490 403h1v9h-1zM491 403h1v6h-1zM492 403h1v6h-1zM493 403h1v9h-1zM494 403h1v6h-1zM495 403h1v6h-1zM496 403h1v6h-1zM497 403h1v9h-1zM498 403h1v6h-1zM499 403h1v9h-1zM500 403h1v9h-1zM501 403h1v9h-1zM502 403h1v6h-1zM503 403h1v6h-1zM504 403h1v9h-1zM505 403h1v6h-1zM506 403h1v9h-1zM508 463h1v6h-1zM509 463h1v6h-1zM510 463h1v6h-1zM511 463h1v6h-1zM512 461h1v8h-1zM513 463h1v6h-1zM514 463h1v6h-1zM515 463h1v6h-1zM516 463h1v6h-1zM517 463h1v6h-1zM518 463h1v9h-1zM519 463h1v6h-1zM520 463h1v6h-1zM521 463h1v6h-1zM522 463h1v9h-1zM523 463h1v9h-1zM524 463h1v8h-1zM525 463h1v6h-1zM526 463h1v6h-1zM527 462h1v7h-1zM528 463h1v6h-1zM530 508h1v7h-1zM531 511h1v4h-1zM532 511h1v4h-1zM533 508h1v7h-1zM534 511h1v4h-1zM535 511h1v4h-1zM536 511h1v7h-1zM537 511h1v7h-1zM538 511h1v4h-1zM539 511h1v4h-1zM540 508h1v7h-1zM541 511h1v4h-1zM542 508h1v7h-1zM543 511h1v7h-1zM544 511h1v7h-1zM545 508h1v7h-1zM546 511h1v4h-1zM547 511h1v4h-1zM548 509h1v6h-1zM549 508h1v7h-1zM550 511h1v4h-1zM551 508h1v7h-1zM552 511h1v4h-1zM553 511h1v4h-1zM554 508h1v7h-1zM555 508h1v7h-1zM556 511h1v4h-1zM557 511h1v4h-1zM558 511h1v4h-1zM559 508h1v7h-1zM560 511h1v4h-1zM561 511h1v4h-1zM562 511h1v7h-1zM563 508h1v9h-1zM564 509h1v9h-1zM565 509h1v6h-1zM566 511h1v4h-1zM567 511h1v4h-1zM568 511h1v4h-1zM569 511h1v4h-1zM570 508h1v7h-1zM571 511h1v4h-1zM573 463h1v6h-1zM574 461h1v8h-1zM575 463h1v6h-1zM576 463h1v6h-1zM577 463h1v6h-1zM578 463h1v6h-1zM579 463h1v6h-1zM580 463h1v6h-1zM581 463h1v6h-1zM582 461h1v8h-1zM583 463h1v6h-1zM584 463h1v6h-1zM585 463h1v9h-1zM586 463h1v6h-1zM587 463h1v9h-1zM588 463h1v9h-1zM589 461h1v8h-1zM590 463h1v6h-1zM591 461h1v8h-1zM592 463h1v9h-1zM593 463h1v6h-1zM595 403h1v6h-1zM596 403h1v9h-1zM597 403h1v6h-1zM598 403h1v6h-1zM599 403h1v6h-1zM600 403h1v6h-1zM601 403h1v6h-1zM602 403h1v6h-1zM603 403h1v6h-1zM604 403h1v8h-1zM605 403h1v6h-1zM606 403h1v9h-1zM607 402h1v7h-1zM608 401h1v8h-1zM609 403h1v6h-1zM610 403h1v9h-1zM611 401h1v8h-1zM612 403h1v6h-1zM613 402h1v10h-1zM614 403h1v9h-1zM615 403h1v6h-1zM617 307h1v6h-1zM618 307h1v9h-1zM619 307h1v6h-1zM620 307h1v9h-1zM621 307h1v6h-1zM622 307h1v6h-1zM623 307h1v9h-1zM624 307h1v9h-1zM625 307h1v6h-1zM626 307h1v6h-1zM627 307h1v6h-1zM628 305h1v8h-1zM629 305h1v8h-1zM630 307h1v9h-1zM631 307h1v6h-1zM632 307h1v6h-1zM633 305h1v8h-1zM634 305h1v8h-1zM635 307h1v6h-1zM636 307h1v6h-1zM638 249h1v7h-1zM639 249h1v7h-1zM640 249h1v4h-1zM641 249h1v7h-1zM642 249h1v4h-1zM643 246h1v7h-1zM644 246h1v10h-1zM645 249h1v4h-1zM646 249h1v7h-1zM647 246h1v10h-1zM648 247h1v9h-1zM649 246h1v7h-1zM650 249h1v4h-1zM651 249h1v7h-1zM652 249h1v4h-1zM653 249h1v4h-1zM654 249h1v7h-1zM655 249h1v4h-1zM656 249h1v4h-1zM657 249h1v7h-1zM658 249h1v4h-1zM660 196h1v12h-1zM661 196h1v9h-1zM662 198h1v10h-1zM663 198h1v10h-1zM664 198h1v7h-1zM665 198h1v7h-1zM666 198h1v10h-1zM667 198h1v10h-1zM668 198h1v7h-1zM669 198h1v9h-1zM670 198h1v7h-1zM671 198h1v7h-1zM672 198h1v10h-1zM673 198h1v7h-1zM674 198h1v7h-1zM675 198h1v7h-1zM676 198h1v9h-1zM677 198h1v9h-1zM678 198h1v10h-1zM679 198h1v7h-1zM680 198h1v7h-1zM681 198h1v10h-1zM682 198h1v7h-1zM683 198h1v7h-1zM684 198h1v10h-1zM685 198h1v10h-1zM686 198h1v7h-1zM687 198h1v10h-1zM688 198h1v7h-1zM689 198h1v7h-1zM690 198h1v10h-1zM691 198h1v10h-1zM692 198h1v10h-1zM693 198h1v7h-1zM694 196h1v9h-1zM695 198h1v10h-1zM696 198h1v9h-1zM697 198h1v7h-1zM698 198h1v7h-1zM699 198h1v7h-1zM700 198h1v10h-1zM701 198h1v10h-1zM702 198h1v7h-1zM704 249h1v7h-1zM705 246h1v10h-1zM706 249h1v4h-1zM707 249h1v4h-1zM708 249h1v7h-1zM709 249h1v4h-1zM710 246h1v7h-1zM711 246h1v7h-1zM712 249h1v4h-1zM713 249h1v7h-1zM714 249h1v7h-1zM715 249h1v7h-1zM716 249h1v4h-1zM717 249h1v7h-1zM718 249h1v4h-1zM719 246h1v7h-1zM720 246h1v7h-1zM721 246h1v7h-1zM722 249h1v4h-1zM723 249h1v4h-1zM725 307h1v6h-1zM726 307h1v9h-1zM727 307h1v8h-1zM728 307h1v6h-1zM729 307h1v6h-1zM730 307h1v9h-1zM731 307h1v6h-1zM732 307h1v6h-1zM733 307h1v6h-1zM734 307h1v6h-1zM735 307h1v6h-1zM736 307h1v6h-1zM737 307h1v6h-1zM738 307h1v6h-1zM739 307h1v9h-1zM740 307h1v9h-1zM741 307h1v9h-1zM742 307h1v6h-1zM743 305h1v8h-1zM744 305h1v8h-1zM745 307h1v6h-1zM747 403h1v9h-1zM748 403h1v8h-1zM749 403h1v6h-1zM750 403h1v6h-1zM751 403h1v6h-1zM752 403h1v6h-1zM753 401h1v8h-1zM754 401h1v11h-1zM755 403h1v6h-1zM756 403h1v6h-1zM757 403h1v6h-1zM758 403h1v9h-1zM759 401h1v8h-1zM760 403h1v9h-1zM761 403h1v6h-1zM762 401h1v8h-1zM763 403h1v6h-1zM764 403h1v6h-1zM765 403h1v9h-1zM766 403h1v6h-1zM767 403h1v6h-1zM769 463h1v9h-1zM770 463h1v6h-1zM771 463h1v6h-1zM772 463h1v6h-1zM773 461h1v8h-1zM774 463h1v6h-1zM775 463h1v6h-1zM776 463h1v6h-1zM777 462h1v7h-1zM778 463h1v6h-1zM779 463h1v6h-1zM780 463h1v6h-1zM781 461h1v11h-1zM782 463h1v6h-1zM783 463h1v6h-1zM784 461h1v8h-1zM785 461h1v11h-1zM786 463h1v6h-1zM787 463h1v6h-1zM788 463h1v6h-1zM790 511h1v4h-1zM791 511h1v4h-1zM792 511h1v4h-1zM793 511h1v4h-1zM794 511h1v4h-1zM795 508h1v7h-1zM796 508h1v7h-1zM797 511h1v4h-1zM798 511h1v4h-1zM799 508h1v7h-1zM800 508h1v7h-1zM801 511h1v4h-1zM802 511h1v4h-1zM803 511h1v7h-1zM804 511h1v7h-1zM805 511h1v7h-1zM806 508h1v7h-1zM807 511h1v7h-1zM808 509h1v8h-1zM809 511h1v7h-1zM810 511h1v4h-1zM811 511h1v4h-1zM812 511h1v4h-1zM813 508h1v7h-1zM814 511h1v4h-1zM815 511h1v4h-1zM816 511h1v4h-1zM817 511h1v4h-1zM818 511h1v7h-1zM819 511h1v4h-1zM820 508h1v7h-1zM821 508h1v7h-1zM822 511h1v4h-1zM823 511h1v7h-1zM824 511h1v4h-1zM825 511h1v4h-1zM826 511h1v4h-1zM827 511h1v4h-1zM828 511h1v4h-1zM829 508h1v7h-1zM830 511h1v4h-1zM831 511h1v4h-1zM832 511h1v4h-1zM834 463h1v6h-1zM835 463h1v9h-1zM836 461h1v8h-1zM837 461h1v11h-1zM838 463h1v6h-1zM839 462h1v7h-1zM840 463h1v6h-1zM841 463h1v6h-1zM842 462h1v10h-1zM843 463h1v8h-1zM844 463h1v6h-1zM845 463h1v6h-1zM846 463h1v6h-1zM847 463h1v6h-1zM848 462h1v7h-1zM849 462h1v7h-1zM850 461h1v8h-1zM851 463h1v6h-1zM852 463h1v6h-1zM853 463h1v6h-1zM854 463h1v6h-1zM856 403h1v9h-1zM857 403h1v6h-1zM858 401h1v11h-1zM859 403h1v9h-1zM860 403h1v6h-1zM861 403h1v9h-1zM862 403h1v6h-1zM863 403h1v6h-1zM864 403h1v8h-1zM865 403h1v9h-1zM866 403h1v6h-1zM867 403h1v6h-1zM868 401h1v8h-1zM869 401h1v8h-1zM870 403h1v9h-1zM871 401h1v11h-1zM872 401h1v11h-1zM873 403h1v6h-1zM874 403h1v9h-1zM875 403h1v6h-1zM877 307h1v9h-1zM878 307h1v9h-1zM879 307h1v9h-1zM880 307h1v6h-1zM881 307h1v6h-1zM882 305h1v8h-1zM883 305h1v8h-1zM884 306h1v7h-1zM885 307h1v9h-1zM886 307h1v9h-1zM887 307h1v6h-1zM888 307h1v6h-1zM889 307h1v6h-1zM890 307h1v6h-1zM891 307h1v9h-1zM892 307h1v9h-1zM893 307h1v6h-1zM894 305h1v8h-1zM895 307h1v6h-1zM896 307h1v8h-1zM897 307h1v9h-1zM899 249h1v4h-1zM900 249h1v7h-1zM901 249h1v7h-1zM902 249h1v7h-1zM903 247h1v6h-1zM904 246h1v7h-1zM905 247h1v9h-1zM906 249h1v7h-1zM907 249h1v4h-1zM908 249h1v4h-1zM909 249h1v4h-1zM910 249h1v7h-1zM911 246h1v7h-1zM912 246h1v7h-1zM913 246h1v7h-1zM914 249h1v7h-1zM915 249h1v7h-1zM916 246h1v7h-1zM917 249h1v4h-1zM918 247h1v6h-1zM919 249h1v6h-1zM921 198h1v10h-1zM922 198h1v7h-1zM923 198h1v10h-1zM924 198h1v10h-1zM925 198h1v7h-1zM926 198h1v7h-1zM927 198h1v10h-1zM928 198h1v10h-1zM929 198h1v7h-1zM930 198h1v7h-1zM931 198h1v7h-1zM932 198h1v7h-1zM933 198h1v10h-1zM934 198h1v10h-1zM935 196h1v9h-1zM936 198h1v7h-1zM937 198h1v9h-1zM938 198h1v7h-1zM939 198h1v7h-1zM940 198h1v7h-1zM941 198h1v7h-1zM942 198h1v10h-1zM943 198h1v10h-1zM944 198h1v7h-1zM945 198h1v7h-1zM946 198h1v7h-1zM947 198h1v10h-1zM948 198h1v7h-1zM949 198h1v7h-1zM950 198h1v10h-1zM951 198h1v7h-1zM952 198h1v10h-1zM953 198h1v9h-1zM954 198h1v10h-1zM955 198h1v7h-1zM956 198h1v10h-1zM957 198h1v7h-1zM958 198h1v9h-1zM959 198h1v10h-1zM960 198h1v7h-1zM961 198h1v7h-1zM962 198h1v10h-1zM964 249h1v6h-1zM965 247h1v9h-1zM966 249h1v4h-1zM967 249h1v6h-1zM968 249h1v7h-1zM969 246h1v9h-1zM970 249h1v4h-1zM971 249h1v4h-1zM972 249h1v4h-1zM973 249h1v7h-1zM974 249h1v7h-1zM975 249h1v4h-1zM976 249h1v4h-1zM977 246h1v7h-1zM978 249h1v7h-1zM979 249h1v7h-1zM980 249h1v4h-1zM981 249h1v7h-1zM982 249h1v4h-1zM983 249h1v7h-1zM984 249h1v7h-1zM986 307h1v9h-1zM987 307h1v8h-1zM988 307h1v9h-1zM989 307h1v6h-1zM990 307h1v6h-1zM991 307h1v6h-1zM992 307h1v6h-1zM993 307h1v6h-1zM994 307h1v6h-1zM995 306h1v10h-1zM996 307h1v9h-1zM997 307h1v6h-1zM998 305h1v11h-1zM999 307h1v9h-1zM1000 306h1v9h-1zM1001 307h1v6h-1zM1002 307h1v9h-1zM1003 307h1v6h-1zM1004 307h1v6h-1zM1005 307h1v9h-1zM1006 305h1v11h-1zM1008 403h1v9h-1zM1009 403h1v6h-1zM1010 403h1v9h-1zM1011 403h1v6h-1zM1012 403h1v6h-1zM1013 403h1v9h-1zM1014 403h1v9h-1zM1015 403h1v9h-1zM51 460h1v55h-1zM52 450h1v21h-1zM53 458h1v11h-1zM73 400h1v69h-1zM74 390h1v21h-1zM75 398h1v11h-1zM95 304h1v105h-1zM96 282h1v35h-1zM97 298h1v15h-1zM116 246h1v67h-1zM117 236h1v19h-1zM118 244h1v9h-1zM138 195h1v58h-1zM139 185h1v22h-1zM140 193h1v12h-1zM182 198h1v57h-1zM183 246h1v19h-1zM184 249h1v7h-1zM203 249h1v66h-1zM204 304h1v21h-1zM205 307h1v9h-1zM225 307h1v104h-1zM226 398h1v35h-1zM227 403h1v13h-1zM247 403h1v68h-1zM248 460h1v21h-1zM249 463h1v9h-1zM268 463h1v54h-1zM269 508h1v19h-1zM270 511h1v7h-1zM312 460h1v55h-1zM313 450h1v21h-1zM314 458h1v11h-1zM334 400h1v69h-1zM335 390h1v21h-1zM336 398h1v11h-1zM355 304h1v105h-1zM356 282h1v35h-1zM357 298h1v15h-1zM377 246h1v67h-1zM378 236h1v19h-1zM379 244h1v9h-1zM399 195h1v58h-1zM400 185h1v22h-1zM401 193h1v12h-1zM442 198h1v57h-1zM443 246h1v19h-1zM444 249h1v7h-1zM464 249h1v66h-1zM465 304h1v21h-1zM466 307h1v9h-1zM485 307h1v104h-1zM486 398h1v35h-1zM487 403h1v13h-1zM507 403h1v68h-1zM508 460h1v21h-1zM509 463h1v9h-1zM529 463h1v54h-1zM530 508h1v19h-1zM531 511h1v7h-1zM572 460h1v55h-1zM573 450h1v21h-1zM574 458h1v11h-1zM594 400h1v69h-1zM595 390h1v21h-1zM596 398h1v11h-1zM616 304h1v105h-1zM617 282h1v35h-1zM618 298h1v15h-1zM637 246h1v67h-1zM638 236h1v19h-1zM639 244h1v9h-1zM659 195h1v58h-1zM660 185h1v22h-1zM661 193h1v12h-1zM703 198h1v57h-1zM704 246h1v19h-1zM705 249h1v7h-1zM724 249h1v66h-1zM725 304h1v21h-1zM726 307h1v9h-1zM746 307h1v104h-1zM747 398h1v35h-1zM748 403h1v13h-1zM768 403h1v68h-1zM769 460h1v21h-1zM770 463h1v9h-1zM789 463h1v54h-1zM790 508h1v19h-1zM791 511h1v7h-1zM833 460h1v55h-1zM834 450h1v21h-1zM835 458h1v11h-1zM855 400h1v69h-1zM856 390h1v21h-1zM857 398h1v11h-1zM876 304h1v105h-1zM877 282h1v35h-1zM878 298h1v15h-1zM898 246h1v67h-1zM899 236h1v19h-1zM900 244h1v9h-1zM920 195h1v58h-1zM921 185h1v22h-1zM922 193h1v12h-1zM963 198h1v57h-1zM964 246h1v19h-1zM965 249h1v7h-1zM985 249h1v66h-1zM986 304h1v21h-1zM987 307h1v9h-1zM1007 307h1v104h-1zM1008 398h1v35h-1zM1009 403h1v13h-1z"/>
<path fill="#ffa800" d="M310.5 35.5H321.5L316 46.5Z"/>
<circle cx="10.4" cy="358.1" r="8.7" fill="#ffff00" stroke="#ffa000" stroke-width="2"/>
<path fill="#ffff00" d="M19 357h4.5v-4.3l7.3 5.6l-7.3 5.2v-4.4H19z"/>
<path fill="#201c00" d="M10.1 353.8h1.9v8.1h-1.9v-5.6l-2.1 1.3v-1.7z"/>
</svg>
<div class="t" style="left:447px;top:604px;padding:0 2px 3px 2px;background:#000;font-size:13px;letter-spacing:0.14px;color:#e4e4e4">Record Length:20.0k</div>
<div style="position:absolute;left:16px;top:672px;width:1001px;height:96px;background:#000"></div>
<div class="box" style="left:21px;top:674px;width:281px;height:24px"></div>
<div style="position:absolute;left:30px;top:681px;width:33px;height:14px;border-radius:7px;background:linear-gradient(to bottom,#d8d8d8,#808080 60%,#303030)"></div><div style="position:absolute;left:31.5px;top:683px;width:30px;height:11px;border-radius:5.5px;background:linear-gradient(to bottom,#f4f400,#c8c800 70%,#a0a000)"></div>
<div class="t" style="left:39px;top:684px;font-size:10px;font-weight:bold;color:#181800">C1</div>
<div class="t" style="left:67px;top:681px;color:#f0f0f0;font-weight:bold;font-size:12px;letter-spacing:0.15px">50.0V/div</div>
<div class="t" style="left:183px;top:681px;color:#f0f0f0;font-weight:bold;font-size:12px;letter-spacing:0.15px">1M&#937;</div>
<div style="position:absolute;line-height:1;left:215px;top:679.5px;font-size:9.5px;font-weight:bold;color:#f0f0f0">B</div>
<div style="position:absolute;line-height:1;left:220.3px;top:685.3px;font-size:10.5px;font-weight:bold;color:#f0f0f0">W</div>
<div class="t" style="left:229px;top:681px;color:#f0f0f0;font-weight:bold;font-size:12px;letter-spacing:0.15px">:20.0M</div>
<div class="box" style="left:591px;top:674px;width:186px;height:26px"></div>
<div style="position:absolute;left:598px;top:681px;width:15px;height:15px;background:#c8c8c8"></div>
<div class="t" style="left:600.5px;top:681px;font-size:11px;color:#101010;-webkit-text-stroke:0.55px #101010">A</div>
<div style="position:absolute;left:615px;top:682px;width:33px;height:13px;border-radius:7px;background:linear-gradient(to bottom,#c0c0c0,#606060);box-shadow:0 0 1px 0.5px #404040"></div>
<div class="t" style="left:622px;top:684px;font-size:9.5px;letter-spacing:0.6px;color:#181818;-webkit-text-stroke:0.3px #181818">Aux</div>
<svg width="1024" height="768" style="position:absolute;left:0;top:0"><path d="M650.5 693H655.5L660.5 682.2H664.5" stroke="#f0f0f0" stroke-width="2" fill="none" stroke-linejoin="round"/></svg>
<div class="t" style="left:668px;top:681px;color:#f0f0f0;font-weight:bold;font-size:12px;letter-spacing:0.15px">5.0V</div>
<div class="box" style="left:781px;top:674px;width:231px;height:93px"></div>
<div class="t" style="left:789px;top:681px;color:#f0f0f0;font-weight:bold;font-size:12px;letter-spacing:0.15px">6.4ms/div</div>
<div class="t" style="left:854px;top:681px;color:#f0f0f0;font-weight:bold;font-size:12px;letter-spacing:0.15px">312.5kS/s</div>
<div class="t" style="left:939px;top:681px;color:#f0f0f0;font-weight:bold;font-size:12px;letter-spacing:0.15px">3.2&#956;s/pt</div>
<div class="t" style="left:789px;top:702px;font-size:12px;font-weight:bold;letter-spacing:0.15px;color:#e8e800">Preview</div>
<div style="position:absolute;left:993px;top:701px;width:4px;height:13px;border-radius:2px;background:#f0f020"></div>
<div style="position:absolute;left:991px;top:712px;width:7px;height:7px;border-radius:50%;background:#f0f020"></div>
<div class="t" style="left:789px;top:723px;color:#f0f0f0;font-weight:bold;font-size:12px;letter-spacing:0.15px">0 acqs</div>
<div class="t" style="left:929px;top:723px;color:#f0f0f0;font-weight:bold;font-size:12px;letter-spacing:0.15px">RL:20.0k</div>
<div class="t" style="left:789px;top:744px;color:#f0f0f0;font-weight:bold;font-size:12px;letter-spacing:0.15px">Man</div>
<div class="t" style="left:831px;top:744px;color:#f0f0f0;font-weight:bold;font-size:12px;letter-spacing:0.15px">January 02, 2024</div>
<div class="t" style="left:956px;top:744px;font-size:12px;font-weight:bold;letter-spacing:0.15px;color:#f09000">16:15:14</div>
</body></html>
